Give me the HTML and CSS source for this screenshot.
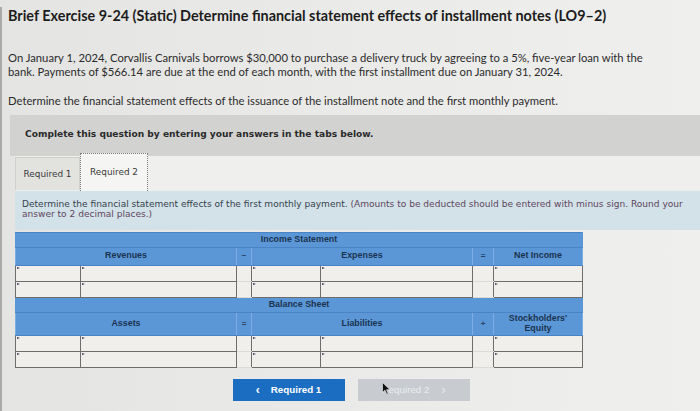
FILE: index.html
```html
<!DOCTYPE html>
<html>
<head>
<meta charset="utf-8">
<link rel="stylesheet" href="styles.css">
</head>
<body>
<div class="page">
  <h1 class="title">Brief Exercise 9-24 (Static) Determine financial statement effects of installment notes (LO9–2)</h1>
  <p class="para first">On January 1, 2024, Corvallis Carnivals borrows $30,000 to purchase a delivery truck by agreeing to a 5%, five-year loan with the<br>bank. Payments of $566.14 are due at the end of each month, with the first installment due on January 31, 2024.</p>
  <p class="para second">Determine the financial statement effects of the issuance of the installment note and the first monthly payment.</p>

  <div class="band">Complete this question by entering your answers in the tabs below.</div>

  <div class="tabs">
    <div class="tab">Required 1</div>
    <div class="tab active">Required 2</div>
  </div>

  <div class="instr">Determine the financial statement effects of the first monthly payment. <span class="note">(Amounts to be deducted should be entered with minus sign. Round your<br>answer to 2 decimal places.)</span></div>

  <table class="grid">
    <colgroup>
      <col class="c1"><col class="c2"><col class="c3"><col class="c4"><col class="c5"><col class="c6"><col class="c7">
    </colgroup>
    <tr class="r-sec"><th colspan="7">Income Statement</th></tr>
    <tr class="r-head">
      <th colspan="2">Revenues</th><th class="op">−</th><th colspan="2">Expenses</th><th class="op">=</th><th>Net Income</th>
    </tr>
    <tr class="r-data">
      <td class="in"></td><td class="in"></td><td class="sep"></td><td class="in"></td><td class="in"></td><td class="sep"></td><td class="in"></td>
    </tr>
    <tr class="r-data">
      <td class="in"></td><td class="in"></td><td class="sep"></td><td class="in"></td><td class="in"></td><td class="sep"></td><td class="in"></td>
    </tr>
    <tr class="r-sec"><th colspan="7">Balance Sheet</th></tr>
    <tr class="r-head tall">
      <th colspan="2">Assets</th><th class="op">=</th><th colspan="2">Liabilities</th><th class="op">+</th><th>Stockholders'<br>Equity</th>
    </tr>
    <tr class="r-data">
      <td class="in"></td><td class="in"></td><td class="sep"></td><td class="in"></td><td class="in"></td><td class="sep"></td><td class="in"></td>
    </tr>
    <tr class="r-data">
      <td class="in"></td><td class="in"></td><td class="sep"></td><td class="in"></td><td class="in"></td><td class="sep"></td><td class="in"></td>
    </tr>
  </table>

  <div class="nav">
    <div class="btn prev"><span class="chev">‹</span>Required 1</div>
    <div class="btn next">Required 2<span class="chev">›</span>
      <svg class="cursor" width="9" height="13" viewBox="0 0 9 13"><path d="M0.5 0.5 L0.5 10.5 L3 8.2 L4.8 12.2 L6.2 11.6 L4.5 7.7 L8 7.7 Z" fill="#111" stroke="#eee" stroke-width="0.6"/></svg>
    </div>
  </div>
</div>
</body>
</html>
```

FILE: styles.css
```css
html, body {
  margin: 0;
  padding: 0;
}
body {
  width: 700px;
  height: 411px;
  overflow: hidden;
  background: linear-gradient(90deg, #e4e4e2 0%, #eaeae8 50%, #efefee 100%);
}
.page {
  height: 409px;
  border-left: 2px solid #a9a9a7;
  border-bottom: 2px solid #d6d6d4;
  box-sizing: border-box;
  position: relative;
}
.title {
  margin: 7px 0 0 6px;
  font-family: Lato, "Open Sans", sans-serif;
  font-weight: 700;
  font-size: 14.4px;
  line-height: 18px;
  color: #1c1c1c;
  white-space: nowrap;
}
.para {
  margin: 0 0 0 6px;
  font-family: Lato, "Open Sans", sans-serif;
  font-size: 11.25px;
  line-height: 13.5px;
  color: #2b2b2b;
  white-space: nowrap;
}
.para.first { margin-top: 26px; }
.para.second { margin-top: 16px; }
.band {
  margin: 7px 0 0 8px;
  height: 41px;
  box-sizing: border-box;
  padding: 13px 0 0 15px;
  background: #d2d2d1;
  font-family: "DejaVu Sans", Verdana, sans-serif;
  font-weight: 700;
  font-size: 9.1px;
  line-height: 12px;
  color: #2a2a2a;
  white-space: nowrap;
}
.tabs {
  display: flex;
  align-items: flex-end;
  height: 35px;
  margin-left: 13px;
  background: #efefed;
}
.tab {
  height: 33px;
  width: 65px;
  box-sizing: border-box;
  display: flex;
  align-items: center;
  justify-content: center;
  background: #e2e2df;
  border: 1px solid #cfcfcc;
  border-bottom: none;
  font-family: "DejaVu Sans", Verdana, sans-serif;
  font-size: 8.9px;
  color: #3a3a3a;
  margin-bottom: 1px;
  white-space: nowrap;
}
.tab.active {
  width: 68px;
  height: 38px;
  margin-bottom: 0;
  background: #f5f5f3;
  border: 1px dotted #7d7d7d;
  border-bottom: none;
}
.instr {
  margin-left: 13px;
  height: 39px;
  box-sizing: border-box;
  padding: 8px 0 0 7px;
  background: #d3e1e8;
  font-family: "DejaVu Sans", Verdana, sans-serif;
  font-size: 9.05px;
  line-height: 10px;
  color: #34424d;
  white-space: nowrap;
}
.instr .note {
  color: #5f4660;
}
.grid {
  margin: 2px 0 0 13px;
  border-collapse: collapse;
  table-layout: fixed;
  width: 567px;
}
.c1 { width: 65px; }
.c2 { width: 156px; }
.c3 { width: 15px; }
.c4 { width: 69px; }
.c5 { width: 152px; }
.c6 { width: 21px; }
.c7 { width: 89px; }
.grid th {
  background: #5b97d7;
  border: 1px solid #4a84c4;
  padding: 0;
  font-family: "Liberation Sans", Arial, sans-serif;
  font-weight: 700;
  font-size: 8.9px;
  line-height: 9.5px;
  color: #1a3350;
  text-align: center;
  vertical-align: middle;
}
.grid th.op {
  font-size: 8px;
  color: #2a4464;
}
.r-sec { height: 15px; }
.r-sec th { border-left-color: #5b97d7; border-right-color: #5b97d7; }
.r-head { height: 18px; }
.r-head th { border-color: #7aaee4; border-top-color: #4a84c4; border-bottom-color: #4a84c4; }
.r-head.tall { height: 23px; }
.r-data { height: 16px; }
.grid td {
  padding: 0;
  background: #f1efeb;
}
.grid td.in {
  border: 1.5px solid #6d6d6d;
  position: relative;
}
.grid td.in::before {
  content: "";
  position: absolute;
  left: 1px;
  top: 1px;
  border-left: 3px solid #3a3f55;
  border-top: 1.5px solid transparent;
  border-bottom: 1.5px solid transparent;
}
.grid td.sep {
  border-top: none;
  border-bottom: 1px solid #dddbd6;
}
.nav {
  display: flex;
  justify-content: center;
  gap: 13px;
  margin-top: 11px;
}
.btn {
  width: 112px;
  height: 22px;
  display: flex;
  align-items: center;
  justify-content: center;
  font-family: "Liberation Sans", Arial, sans-serif;
  font-weight: 700;
  font-size: 9.8px;
  position: relative;
}
.btn.prev {
  background: #1b6dc1;
  color: #ffffff;
}
.btn.prev .chev {
  margin-right: 11px;
  font-size: 12px;
}
.btn.next {
  background: #c8ccd0;
  color: #e9ecef;
  font-weight: 400;
}
.btn.next .chev {
  margin-left: 12px;
  font-size: 12px;
}
.cursor {
  position: absolute;
  left: 24px;
  top: 3px;
}
```
